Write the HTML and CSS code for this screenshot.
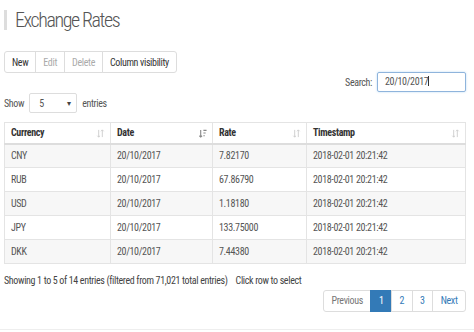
FILE: index.html
```html
<!DOCTYPE html>
<html lang="en">
<head>
    <meta charset="UTF-8">
    <title>Exchange Rates</title>
    <link rel="stylesheet" href="styles.css">
</head>
<body>
    <div class="page">
        <!-- Title -->
        <h1 class="page-title">Exchange Rates</h1>

        <!-- Toolbar -->
        <div class="toolbar">
            <div class="btn-group">
                <button class="btn">New</button>
                <button class="btn disabled">Edit</button>
                <button class="btn disabled">Delete</button>
                <button class="btn">Column visibility</button>
            </div>
            <div class="search">
                <label>Search:</label>
                <div class="search-input">20/10/2017<span class="caret-line"></span></div>
            </div>
        </div>

        <div class="length">
            Show
            <div class="select">
                <span>5</span>
                <span class="arrow">&#9662;</span>
            </div>
            entries
        </div>

        <table class="rates">
            <thead>
                <tr>
                    <th class="c1">Currency <svg class="sort" viewBox="0 0 10 10"><path d="M3 1v8M1.5 7.5L3 9l1.5-1.5M7 9V1M5.5 2.5L7 1l1.5 1.5" fill="none" stroke="#ccc" stroke-width="1"/></svg></th>
                    <th class="c2">Date <svg class="sort" viewBox="0 0 10 10"><path d="M3 1v8M1.5 7.5L3 9l1.5-1.5" fill="none" stroke="#888" stroke-width="1.2"/><path d="M6 1.5h3.5M6 4.5h2.5M6 7.5h1.5" stroke="#888" stroke-width="1.2"/></svg></th>
                    <th class="c3">Rate <svg class="sort" viewBox="0 0 10 10"><path d="M3 1v8M1.5 7.5L3 9l1.5-1.5M7 9V1M5.5 2.5L7 1l1.5 1.5" fill="none" stroke="#ccc" stroke-width="1"/></svg></th>
                    <th class="c4">Timestamp <svg class="sort" viewBox="0 0 10 10"><path d="M3 1v8M1.5 7.5L3 9l1.5-1.5M7 9V1M5.5 2.5L7 1l1.5 1.5" fill="none" stroke="#ccc" stroke-width="1"/></svg></th>
                </tr>
            </thead>
            <tbody>
                <tr><td>CNY</td><td>20/10/2017</td><td>7.82170</td><td>2018-02-01 20:21:42</td></tr>
                <tr><td>RUB</td><td>20/10/2017</td><td>67.86790</td><td>2018-02-01 20:21:42</td></tr>
                <tr><td>USD</td><td>20/10/2017</td><td>1.18180</td><td>2018-02-01 20:21:42</td></tr>
                <tr><td>JPY</td><td>20/10/2017</td><td>133.75000</td><td>2018-02-01 20:21:42</td></tr>
                <tr><td>DKK</td><td>20/10/2017</td><td>7.44380</td><td>2018-02-01 20:21:42</td></tr>
            </tbody>
        </table>

        <div class="info">
            Showing 1 to 5 of 14 entries (filtered from 71,021 total entries)
            <span class="select-info">Click row to select</span>
        </div>

        <div class="pager">
            <ul class="pagination">
                <li class="disabled"><a href="#">Previous</a></li>
                <li class="active"><a href="#">1</a></li>
                <li><a href="#">2</a></li>
                <li><a href="#">3</a></li>
                <li><a href="#">Next</a></li>
            </ul>
        </div>
    </div>
    <div class="footer-line"></div>
</body>
</html>
```

FILE: styles.css
```css
* {
    margin: 0;
    padding: 0;
    box-sizing: border-box;
}

body {
    font-family: "Roboto Condensed", Roboto, sans-serif;
    font-size: 10px;
    letter-spacing: -0.35px;
    background-color: #fff;
    color: #555;
}

.page {
    padding: 0 8px 0 4px;
}

/* Title */
.page-title {
    font-weight: 300;
    font-size: 20px;
    letter-spacing: -1.4px;
    color: #555;
    margin-top: 10px;
    padding-left: 8px;
    border-left: 3px solid #ddd;
    line-height: 20px;
    height: 20px;
}

/* Toolbar */
.toolbar {
    display: flex;
    justify-content: space-between;
    align-items: flex-start;
    margin-top: 21px;
}

.btn-group {
    display: flex;
}

.btn {
    font-family: inherit;
    font-size: 10px;
    letter-spacing: inherit;
    color: #333;
    background-color: #fff;
    border: 1px solid #ddd;
    margin-left: -1px;
    height: 22px;
    padding: 0 7px;
}

.btn:first-child {
    margin-left: 0;
    border-radius: 3px 0 0 3px;
}

.btn:last-child {
    border-radius: 0 3px 3px 0;
}

.btn.disabled {
    color: #aaa;
}

.search {
    display: flex;
    align-items: center;
    margin-top: 21px;
}

.search label {
    color: #555;
    margin-right: 5px;
}

.search-input {
    width: 89px;
    height: 20px;
    border: 1px solid #8fb4dc;
    border-radius: 2px;
    padding: 0 7px;
    line-height: 18px;
    color: #555;
    box-shadow: 0 0 2px rgba(102, 175, 233, 0.5);
}

.caret-line {
    display: inline-block;
    width: 1px;
    height: 10px;
    background-color: #333;
    vertical-align: -1px;
}

/* Length select */
.length {
    display: flex;
    align-items: center;
    margin-top: 1px;
}

.select {
    display: flex;
    justify-content: space-between;
    align-items: center;
    width: 48px;
    height: 20px;
    border: 1px solid #ddd;
    border-radius: 2px;
    margin: 0 5px;
    padding: 0 5px 0 9px;
}

.select .arrow {
    font-size: 8px;
    color: #444;
}

/* Table */
.rates {
    width: 462px;
    border-collapse: collapse;
    margin-top: 9px;
}

.rates th,
.rates td {
    border: 1px solid #e4e4e4;
    padding: 0 6px;
    text-align: left;
    height: 24px;
}

.rates th {
    color: #333;
    font-weight: bold;
    height: 21px;
    border-bottom: 2px solid #ddd;
    position: relative;
}

.rates .sort {
    width: 9px;
    height: 9px;
    position: absolute;
    right: 5px;
    top: 6px;
}

.c1 { width: 106px; }
.c2 { width: 102px; }
.c3 { width: 94px; }

.rates tbody tr:nth-child(odd) {
    background-color: #f7f7f7;
}

/* Info */
.info {
    margin-top: 11px;
    color: #444;
}

.select-info {
    margin-left: 6px;
}

/* Pagination */
.pager {
    display: flex;
    justify-content: flex-end;
    margin-top: 4px;
}

.pagination {
    display: flex;
    list-style: none;
}

.pagination li a {
    display: block;
    height: 22px;
    line-height: 20px;
    padding: 0 7.5px;
    border: 1px solid #ddd;
    margin-left: -1px;
    color: #337ab7;
    text-decoration: none;
}

.pagination li:first-child a {
    margin-left: 0;
    border-radius: 3px 0 0 3px;
}

.pagination li:last-child a {
    border-radius: 0 3px 3px 0;
}

.pagination li.disabled a {
    color: #777;
}

.pagination li.active a {
    background-color: #337ab7;
    border-color: #337ab7;
    color: #fff;
}

.footer-line {
    border-top: 1px solid #eee;
    margin-top: 17px;
}
```
